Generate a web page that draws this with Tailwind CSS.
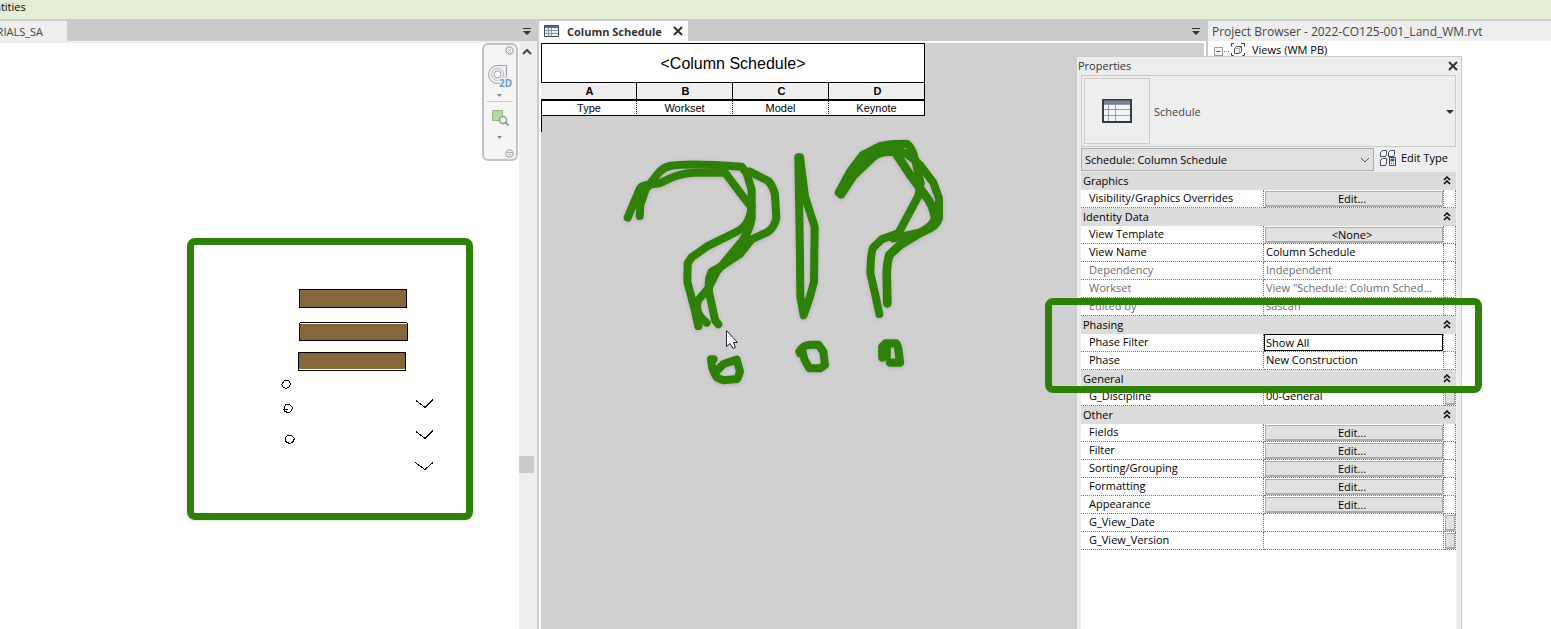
<!DOCTYPE html>
<html lang="en">
<head>
    <meta charset="UTF-8">
    <meta name="viewport" content="width=device-width, initial-scale=1.0">
    <title>Column Schedule</title>
    <script src="https://cdn.jsdelivr.net/npm/@tailwindcss/browser@4"></script>
</head>
<body class="h-screen flex flex-col overflow-hidden relative bg-white font-['Open_Sans',sans-serif] text-[11px] leading-4 text-black">
    <!-- Message bar -->
    <header class="h-[19px] shrink-0 bg-[#e5efd6] flex items-start leading-[14px]">
        <p class="-ml-3">entities</p>
    </header>

    <div class="flex flex-1 min-h-0 bg-[#cbcbcb] pt-[2px]">
        <!-- Drawing view -->
        <section class="w-[537px] shrink-0 flex flex-col">
            <div class="h-5 shrink-0 flex items-center justify-between">
                <a href="#" class="h-5 w-[67px] bg-[#eee] text-[#444] flex items-center justify-end pt-[2px] pr-6 overflow-hidden whitespace-nowrap">MATERIALS_SA</a>
                <button type="button" aria-label="View list" class="mr-1">
                    <svg class="w-3 h-3" viewBox="0 0 12 12"><path d="M2 3h8v1H2zM2 6h8L6 10z" fill="#333"/></svg>
                </button>
            </div>
            <div class="flex-1 flex bg-white border-t-2 border-[#eee] min-h-0">
                <div class="flex-1 relative">
                    <!-- Model elements -->
                    <svg class="absolute left-[180px] top-[187px] w-[300px] h-[300px]" viewBox="0 0 300 300" fill="none" stroke="#000" shape-rendering="crispEdges">
                        <path d="M119.500 59.500h107v18h-107z" fill="#86673b"/>
                        <path d="M119.500 93.500h108v17h-108z" fill="#86673b"/>
                        <path d="M120 93.500h107" stroke="#fff"/>
                        <path d="M120 92.500h107"/>
                        <path d="M118.500 122.500h107v18h-107z" fill="#86673b"/>
                        <path d="M119 139.500h106" stroke="#fff"/>
                        <path d="M104.500 150.500h4l2 3-1 3-3 2-3-1-2-3zM105.500 174.500h4l3 3-1 4-3 1-4-1v-4zM103 179.500h5M107.500 205.500h4l3 3-2 4-3 1-4-2v-4z"/>
                        <path d="M236 170.500l9 7 8-8M236 201.500l9 7 8-8M235 232.500l10 7 8-7"/>
                    </svg>
                    <div class="absolute left-[187px] top-[195px] w-[286px] h-[282px] border-7 border-[#2f8008] rounded-lg shadow-sm"></div>

                    <!-- Navigation bar -->
                    <div class="absolute right-px top-0 w-9 h-[118px] bg-[#f5f5f5] border-2 border-[#c2c2c2] rounded-md">
                        <svg class="w-8 h-[114px]" viewBox="0 0 32 114" fill="none">
                            <g stroke="#b4b4b4">
                                <circle cx="25.500" cy="5.500" r="3.500" stroke-width="1.500"/>
                                <path d="M24 4l3 3m0-3l-3 3"/>
                                <circle cx="25.500" cy="108.500" r="3.500" stroke-width="1.500"/>
                                <path d="M23 107.500h5M24 109.500h3"/>
                                <path d="M3 56.500h26" stroke="#c8c8c8"/>
                            </g>
                            <path d="M13.500 20.500h9v10a9 9 0 1 1-9-10z" stroke="#9aa3ae" fill="#eef0f3"/>
                            <circle cx="13.500" cy="29.500" r="6" stroke="#b5bbc4"/>
                            <circle cx="13.500" cy="29.500" r="3.500" stroke="#9aa3ae" fill="#fff"/>
                            <text x="15" y="42" font-size="10" font-weight="700" fill="#719bd0" stroke="#f5f5f5" stroke-width="2" paint-order="stroke">2D</text>
                            <path d="M13 49h5l-2.500 3zM13 91h5l-2.500 3z" fill="#888"/>
                            <path d="M8.500 65.500h10v10h-10z" stroke="#8dbb83" fill="#b5d9a8"/>
                            <circle cx="19" cy="75" r="3.500" stroke="#999" fill="#eef2f4" stroke-width="1.500"/>
                            <path d="M21.500 77.500l3 3" stroke="#999" stroke-width="2"/>
                        </svg>
                    </div>
                </div>
                <!-- Scrollbar -->
                <div class="w-[18px] bg-[#efefef] flex flex-col">
                    <svg class="w-4 h-4" viewBox="0 0 16 16" fill="none"><path d="M4 11l4-4 4 4" stroke="#444" stroke-width="2"/></svg>
                    <div class="mt-[397px] w-[15px] h-[17px] bg-[#cbcbcb]"></div>
                </div>
            </div>
        </section>

        <!-- Schedule view -->
        <section class="ml-[2px] flex-1 min-w-0 flex flex-col">
            <div class="h-5 shrink-0 flex items-center justify-between">
                <div class="h-5 bg-white flex items-center pl-[5px] pr-1 text-[#333] font-bold">
                    <svg class="w-[15px] h-3 mr-2" viewBox="0 0 15 12"><path d="M.500 .500h14v11H.500z" fill="#e8eef0" stroke="#3c4a58"/><path d="M1 1h13v2H1z" fill="#5d6b7a"/><path d="M1 5.500h13M1 8.500h13M4.500 3v8M7.500 3v8" stroke="#8b979f"/></svg>
                    <span class="pt-[2px]">Column Schedule</span>
                    <button type="button" aria-label="Close tab" class="ml-[10px]">
                        <svg class="w-3 h-3 block" viewBox="0 0 12 12"><path d="M2 2l8 8M10 2l-8 8" stroke="#333" stroke-width="2"/></svg>
                    </button>
                </div>
                <button type="button" aria-label="View list" class="mr-1">
                    <svg class="w-3 h-3" viewBox="0 0 12 12"><path d="M2 3h8v1H2zM2 6h8L6 10z" fill="#333"/></svg>
                </button>
            </div>
            <div class="flex-1 relative bg-[#d0d0d0] border-2 border-b-0 border-white">
                <table class="w-96 table-fixed border-separate border-spacing-0 font-['Liberation_Sans',sans-serif] text-center">
                    <caption class="h-10 bg-white border border-black text-base leading-10">&lt;Column Schedule&gt;</caption>
                    <thead>
                        <tr class="h-[18px] bg-[#efefef] leading-4">
                            <th class="p-0 pl-[2px] border-r border-b-2 border-black">A</th>
                            <th class="p-0 pl-[2px] border-r border-b-2 border-black">B</th>
                            <th class="p-0 pl-[2px] border-r border-b-2 border-black">C</th>
                            <th class="p-0 pl-[2px] border-r border-b-2 border-black">D</th>
                        </tr>
                    </thead>
                    <tbody>
                        <tr class="h-[15px] bg-white leading-[14px]">
                            <td class="p-0 border-l border-r border-b border-black [border-right-style:dotted]">Type</td>
                            <td class="p-0 border-r border-b border-black [border-right-style:dotted]">Workset</td>
                            <td class="p-0 border-r border-b border-black [border-right-style:dotted]">Model</td>
                            <td class="p-0 border-r border-b border-black">Keynote</td>
                        </tr>
                    </tbody>
                </table>
                <div class="h-4 border-l border-black"></div>

                <!-- Hand-drawn marks -->
                <svg class="absolute left-[59px] top-[87px] w-[360px] h-[270px] drop-shadow-sm" viewBox="0 0 1080 810" fill="none" stroke="#2f8008" stroke-width="24" stroke-linecap="round" stroke-linejoin="round">
                    <path d="M83 263L120 175Q126 167 140 165L178 160L215 143Q245 130 280 128H375L420 188L448 224"/>
                    <path d="M119 258L121 225L137 178L178 126Q192 112 210 108Q260 98 425 110L440 130L455 180V265Q450 300 425 335L350 425L325 475L295 510Q280 550 320 578"/>
                    <path d="M448 124L505 153Q520 170 525 195L529 265Q523 290 505 305L455 328L420 372L370 405L335 425Q322 450 328 490L345 570L355 583"/>
                    <path d="M455 230Q450 280 420 300L320 350L275 382L263 400L262 455L283 535L295 588"/>
                    <path d="M595 82L600 380L601 500L611 556L630 500L642 455L644 290L615 200L600 82Z"/>
                    <path d="M716 188L750 125L788 75L840 48Q880 40 922 42Q938 55 945 88L962 160L955 198L895 310L845 328L820 352Q812 365 811 430L825 490L838 552"/>
                    <path d="M723 193L760 137L820 80Q840 62 885 66L930 134L975 195Q1000 225 1005 265Q1000 285 975 300L900 345L868 375Q860 400 860 430L862 520" stroke-width="26"/>
                    <path d="M840 56Q900 45 960 105L1000 158L1017 205V265Q1010 290 970 305L880 325"/>
                    <path d="M341 688H333Q335 720 350 742L370 751L412 747L420 725L410 689L370 702L348 725"/>
                    <path d="M598 664Q610 645 630 644L655 644L670 665L675 705L660 715H628L614 690L608 668L600 670"/>
                    <path d="M847 683V650L857 640H888Q894 645 896 665L900 698H870M860 680V650" stroke-width="25"/>
                </svg>
                <!-- Pointer -->
                <svg class="absolute left-[184px] top-[286px] w-4 h-5" viewBox="0 0 16 20"><path d="M1.500 1.500v16l3.500-3 3 5 2.500-1-2-5h4z" fill="#fff" stroke="#223"/></svg>
            </div>
        </section>

        <!-- Project browser -->
        <section class="ml-[2px] w-[343px] shrink-0 flex flex-col bg-white">
            <h2 class="h-5 bg-[#eee] px-1 pt-px leading-5 text-[#444] text-xs">Project Browser - 2022-CO125-001_Land_WM.rvt</h2>
            <div class="flex items-center pl-[6px] h-[18px]">
                <svg class="w-8 h-4 mr-[6px]" viewBox="0 0 32 16" fill="none"><path d="M.500 5.500h8v8h-8z" stroke="#999" fill="#f4f4f4"/><path d="M2.500 9.500h4" stroke="#345a8c"/><path d="M10 9.500h6" stroke="#888" stroke-dasharray="1 1"/><path d="M20 1.500h-2.500v3M27 1.500h3.500v3M17.500 11v2.500h2M30.500 11v2.500h-2" stroke="#333"/><path d="M20.500 6.500l2-2h5v5l-2 2h-5z" stroke="#444d5e" fill="#fff"/><path d="M20.500 6.500h5v5M25.500 6.500l2-2" stroke="#a0a6b0"/></svg>
                <span>Views (WM PB)</span>
            </div>
        </section>
    </div>

    <!-- Properties palette -->
    <aside class="absolute right-[89px] top-14 bottom-0 w-[386px] flex flex-col bg-[#eee] border border-b-0 border-[#ccc] pr-[5px]">
        <div class="h-[18px] shrink-0 flex items-center justify-between pl-px">
            <h2 class="text-[#333]">Properties</h2>
            <button type="button" aria-label="Close palette" class="-mr-[3px]">
                <svg class="w-3 h-3 block" viewBox="0 0 12 12"><path d="M2 2l8 8M10 2l-8 8" stroke="#333" stroke-width="2"/></svg>
            </button>
        </div>
        <div class="ml-1 flex-1 min-h-0 flex flex-col">
            <!-- Type selector -->
            <div class="h-[72px] shrink-0 border border-[#ccc] p-[2px] pr-px flex items-center">
                <div class="w-[66px] h-[66px] border border-[#ccc] flex items-center justify-center">
                    <svg class="w-[30px] h-6" viewBox="0 0 30 24"><path d="M1 1h28v22H1z" fill="#f2f4f5" stroke="#343c4a" stroke-width="2"/><path d="M2 1.500h26v3H2z" fill="#7b8799"/><path d="M1 5h28" stroke="#343c4a"/><path d="M2 10.500h26M2 16.500h26M6.500 6v16M13.500 6v16" stroke="#9aa0a8"/></svg>
                </div>
                <span class="ml-1 pt-px flex-1 text-[#444]">Schedule</span>
                <button type="button" aria-label="Change type"><svg class="w-2 h-2 block" viewBox="0 0 8 8"><path d="M0 3h8L4 7z" fill="#333"/></svg></button>
            </div>
            <div class="h-[25px] shrink-0 flex items-start pt-px">
                <div class="relative w-[293px]">
                    <select aria-label="Element filter" class="block w-full h-[23px] appearance-none border border-[#adadad] bg-[#e1e1e1] pl-[3px]">
                        <option>Schedule: Column Schedule</option>
                    </select>
                    <svg class="absolute right-1 top-2 w-[10px] h-2 pointer-events-none" viewBox="0 0 10 8" fill="none"><path d="M1 2l4 4 4-4" stroke="#555"/></svg>
                </div>
                <button type="button" class="ml-[6px] h-5 flex items-center gap-[5px]">
                    <svg class="w-4 h-4" viewBox="0 0 16 16" fill="none" stroke="#444d5e"><path d="M.500 2.500l2-2h4v4l-1 2h-5zM8.500 2.500l2-2h4v4l-1 2h-5zM.500 10.500l2-2h4v5l-1 2h-5z" fill="#f8f8f8"/><path d="M9.500 7.500h6v8h-6z" fill="#fff"/><path d="M11 9h3v2h-3z" fill="#1e64b4" stroke="#1e64b4"/><path d="M11 13.500h1M13 13.500h1"/></svg>
                    <span>Edit Type</span>
                </button>
            </div>
            <!-- Parameters -->
            <div class="flex-1 bg-white min-h-0 overflow-hidden">
                <table class="w-full table-fixed border-separate border-spacing-0 text-left [&_tr]:h-[18px] [&_th]:p-0 [&_th]:font-normal [&_td]:p-0 [&_td]:h-[18px] [&_td]:align-top [&_td]:leading-[15px] [&_td]:border-b [&_td]:border-r [&_td]:border-dotted [&_td]:border-[#777] [&_td:first-child]:pl-2 [&_td]:whitespace-nowrap [&_td_button]:block [&_td_button]:mt-px [&_td_button]:h-4 [&_td_button]:bg-[#e1e1e1] [&_td_button]:border [&_td_button]:border-b-2 [&_td_button]:border-[#adadad] [&_td_button]:pr-1 [&_td_button]:leading-[13px] [&_th_div]:flex [&_th_div]:h-[18px] [&_th_div]:bg-[#dcdcdc] [&_th_div]:items-center [&_th_div]:justify-between [&_th_div]:pl-[2px] [&_th_div]:pr-[5px]">
                    <colgroup><col><col class="w-[180px]"><col class="w-3"></colgroup>
                    <tbody>
                        <tr><th colspan="3"><div>Graphics<svg class="w-2 h-3" viewBox="0 0 8 12" fill="none" stroke="#000"><path d="M1 5l3-3 3 3M1 9l3-3 3 3" stroke-width="1.500"/></svg></div></th></tr>
                        <tr><td>Visibility/Graphics Overrides</td><td><button type="button" class="ml-px w-[178px]">Edit...</button></td><td></td></tr>
                        <tr><th colspan="3"><div>Identity Data<svg class="w-2 h-3" viewBox="0 0 8 12" fill="none" stroke="#000"><path d="M1 5l3-3 3 3M1 9l3-3 3 3" stroke-width="1.500"/></svg></div></th></tr>
                        <tr><td>View Template</td><td><button type="button" class="ml-px w-[178px]">&lt;None&gt;</button></td><td></td></tr>
                        <tr><td>View Name</td><td><input aria-label="View Name" value="Column Schedule" class="block h-[15px] w-full pl-[2px]"></td><td></td></tr>
                        <tr class="text-[#6d6d6d]"><td>Dependency</td><td><div class="pl-[2px]">Independent</div></td><td></td></tr>
                        <tr class="text-[#6d6d6d]"><td>Workset</td><td><div class="pl-[2px] truncate">View "Schedule: Column Sched...</div></td><td></td></tr>
                        <tr class="text-[#6d6d6d]"><td>Edited by</td><td><div class="pl-[2px]">sascan</div></td><td></td></tr>
                        <tr><th colspan="3"><div>Phasing<svg class="w-2 h-3" viewBox="0 0 8 12" fill="none" stroke="#000"><path d="M1 5l3-3 3 3M1 9l3-3 3 3" stroke-width="1.500"/></svg></div></th></tr>
                        <tr><td>Phase Filter</td><td><input aria-label="Phase Filter" value="Show All" class="block h-[17px] w-full pl-px pb-px border border-black"></td><td></td></tr>
                        <tr><td>Phase</td><td><input aria-label="Phase" value="New Construction" class="block h-[15px] w-full pl-[2px]"></td><td></td></tr>
                        <tr><th colspan="3"><div>General<svg class="w-2 h-3" viewBox="0 0 8 12" fill="none" stroke="#000"><path d="M1 5l3-3 3 3M1 9l3-3 3 3" stroke-width="1.500"/></svg></div></th></tr>
                        <tr><td>G_Discipline</td><td><input aria-label="G_Discipline" value="00-General" class="block h-[15px] w-full pl-[2px]"></td><td><button type="button" aria-label="Associate G_Discipline" class="ml-px w-[10px]"></button></td></tr>
                        <tr><th colspan="3"><div>Other<svg class="w-2 h-3" viewBox="0 0 8 12" fill="none" stroke="#000"><path d="M1 5l3-3 3 3M1 9l3-3 3 3" stroke-width="1.500"/></svg></div></th></tr>
                        <tr><td>Fields</td><td><button type="button" class="ml-px w-[178px]">Edit...</button></td><td></td></tr>
                        <tr><td>Filter</td><td><button type="button" class="ml-px w-[178px]">Edit...</button></td><td></td></tr>
                        <tr><td>Sorting/Grouping</td><td><button type="button" class="ml-px w-[178px]">Edit...</button></td><td></td></tr>
                        <tr><td>Formatting</td><td><button type="button" class="ml-px w-[178px]">Edit...</button></td><td></td></tr>
                        <tr><td>Appearance</td><td><button type="button" class="ml-px w-[178px]">Edit...</button></td><td></td></tr>
                        <tr><td>G_View_Date</td><td><input aria-label="G_View_Date" class="block h-[15px] w-full pl-[2px]"></td><td><button type="button" aria-label="Associate G_View_Date" class="ml-px w-[10px]"></button></td></tr>
                        <tr><td>G_View_Version</td><td><input aria-label="G_View_Version" class="block h-[15px] w-full pl-[2px]"></td><td><button type="button" aria-label="Associate G_View_Version" class="ml-px w-[10px]"></button></td></tr>
                    </tbody>
                </table>
            </div>
        </div>
    </aside>
    <div class="absolute right-[69px] top-[298px] w-[437px] h-[95px] border-7 border-[#2f8008] rounded-lg pointer-events-none"></div>
</body>
</html>
